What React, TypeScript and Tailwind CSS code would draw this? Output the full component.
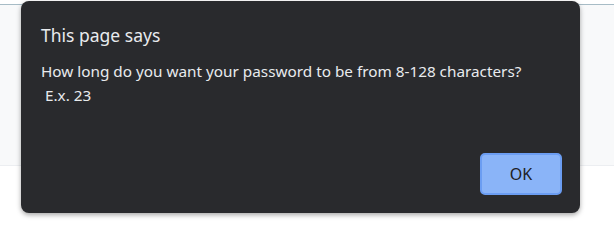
export default function App() {
  return (
    <div className="relative h-[228px] w-[614px] overflow-hidden bg-white font-['Noto_Sans',sans-serif]">
      <div className="h-[4px] bg-white" />
      <div className="h-px bg-[#a7bcc6]" />
      <div className="h-[161px] border-b border-[#eceef1] bg-[#f8f9fa]" />

      <div className="absolute left-[21px] top-[1px] flex h-[212px] w-[559px] flex-col rounded-lg bg-[#292a2d] px-5 pb-[18px] pt-[22px] shadow-[0_2px_5px_rgba(0,0,0,0.35)]">
        <h1 className="text-[17.5px] leading-6 text-[#e8eaed]">This page says</h1>
        <p className="mt-[12px] whitespace-pre text-[15.3px] leading-6 text-[#e8eaed]">
          {'How long do you want your password to be from 8-128 characters?\n E.x. 23'}
        </p>
        <div className="mt-auto flex justify-end">
          <button className="mr-[-2px] h-[42px] w-[82px] rounded-[5px] border-2 border-[#6b9df2] bg-[#8ab4f8] text-[16px] text-[#202124]">
            OK
          </button>
        </div>
      </div>
    </div>
  );
}
